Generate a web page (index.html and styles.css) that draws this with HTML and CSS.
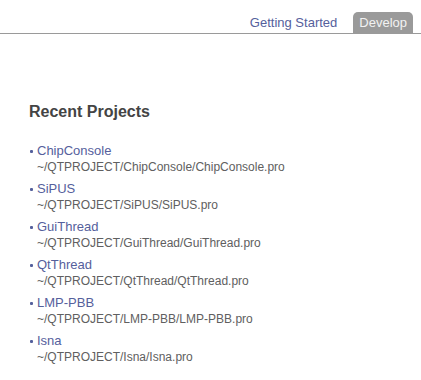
FILE: index.html
```html
<!DOCTYPE html>
<html lang="en">
<head>
  <meta charset="UTF-8" />
  <title>Develop</title>
  <link rel="stylesheet" href="styles.css">
</head>
<body>
  <header class="tabbar">
    <a class="tab" href="#">Getting Started</a>
    <a class="tab active" href="#">Develop</a>
  </header>

  <section class="recent">
    <h2>Recent Projects</h2>
    <ul class="project-list">
      <li>
        <a href="#">ChipConsole</a>
        <span class="path">~/QTPROJECT/ChipConsole/ChipConsole.pro</span>
      </li>
      <li>
        <a href="#">SiPUS</a>
        <span class="path">~/QTPROJECT/SiPUS/SiPUS.pro</span>
      </li>
      <li>
        <a href="#">GuiThread</a>
        <span class="path">~/QTPROJECT/GuiThread/GuiThread.pro</span>
      </li>
      <li>
        <a href="#">QtThread</a>
        <span class="path">~/QTPROJECT/QtThread/QtThread.pro</span>
      </li>
      <li>
        <a href="#">LMP-PBB</a>
        <span class="path">~/QTPROJECT/LMP-PBB/LMP-PBB.pro</span>
      </li>
      <li>
        <a href="#">Isna</a>
        <span class="path">~/QTPROJECT/Isna/Isna.pro</span>
      </li>
    </ul>
  </section>
</body>
</html>
```

FILE: styles.css
```css
* {
  margin: 0;
  padding: 0;
  box-sizing: border-box;
}

body {
  font-family: "Liberation Sans", Arial, sans-serif;
  background: #ffffff;
  color: #606060;
}

a {
  text-decoration: none;
  color: #55609c;
}

.tabbar {
  display: flex;
  justify-content: flex-end;
  align-items: flex-end;
  gap: 4px;
  height: 34px;
  padding-right: 8px;
  border-bottom: 1px solid #9a9a9a;
}

.tab {
  font-size: 13px;
  padding: 4px 6px 3px;
  line-height: 14px;
}

.tab.active {
  background: #9a9a9a;
  color: #f2f2f2;
  border-radius: 5px 5px 0 0;
  margin-left: 6px;
}

.recent {
  padding: 69px 29px 0;
}

.recent h2 {
  font-size: 16px;
  color: #444;
  margin-bottom: 22px;
}

.project-list {
  list-style: none;
}

.project-list li {
  position: relative;
  padding-left: 8px;
  margin-bottom: 6px;
  font-size: 12px;
  line-height: 16px;
}

.project-list li::before {
  content: "";
  position: absolute;
  left: 1px;
  top: 7px;
  width: 3px;
  height: 3px;
  border-radius: 1px;
  background: #55609c;
}

.project-list a {
  display: block;
  font-size: 13px;
}

.path {
  display: block;
  font-size: 12px;
}
```
